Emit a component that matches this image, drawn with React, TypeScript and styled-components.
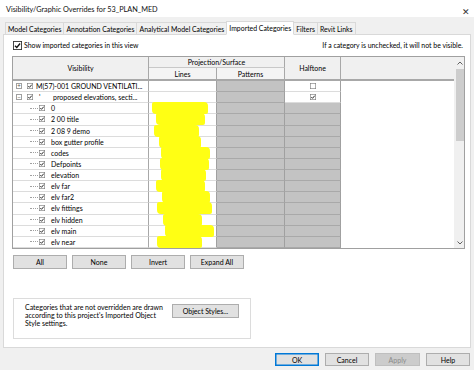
import React from "react";
import styled, { createGlobalStyle } from "styled-components";

const GlobalStyle = createGlobalStyle`
  * { box-sizing: border-box; }
  html, body { margin: 0; padding: 0; background: #f0f0f0; }
  body { font-family: Lato, "Noto Sans", "Liberation Sans", sans-serif; color: #000; }
`;

const Window = styled.div`
  width: 474px;
  height: 370px;
  background: #f0f0f0;
  display: flex;
  flex-direction: column;
  overflow: hidden;
  font-size: 7px;
`;

const TitleBar = styled.div`
  height: 17px;
  background: #fff;
  display: flex;
  align-items: center;
  justify-content: space-between;
  padding: 2px 4px 0 6px;
`;

const TitleText = styled.span`
  font-size: 7.3px;
  color: #111;
`;

const Close = styled.span`
  font-size: 9px;
  color: #333;
  margin-top: 4px;
`;

const TabStrip = styled.div`
  display: flex;
  align-items: flex-end;
  height: 17px;
  padding-left: 5px;
`;

const Tab = styled.div<{ $active?: boolean }>`
  height: ${(p) => (p.$active ? 14 : 12)}px;
  padding: 0 2px;
  display: flex;
  align-items: center;
  white-space: nowrap;
  font-size: 6.9px;
  background: ${(p) => (p.$active ? "#fff" : "#f0f0f0")};
  border: 1px solid #d9d9d9;
  border-bottom: ${(p) => (p.$active ? "1px solid #fff" : "none")};
  margin-bottom: ${(p) => (p.$active ? "-1px" : "0")};
  margin-right: -1px;
  position: relative;
  z-index: ${(p) => (p.$active ? 1 : 0)};
`;

const Panel = styled.div`
  margin: 0 3px;
  height: 314px;
  background: #fff;
  border: 1px solid #d9d9d9;
  padding: 5px 5px 0 8px;
  display: flex;
  flex-direction: column;
`;

const TopRow = styled.div`
  display: flex;
  align-items: center;
  justify-content: space-between;
  height: 10px;
  padding-left: 1px;
  padding-right: 2px;
`;

const CheckLabel = styled.label`
  display: flex;
  align-items: center;
  gap: 2px;
  font-size: 6.9px;
`;

const Note = styled.span`
  font-size: 6.9px;
`;

const Grid = styled.div`
  margin-top: 6px;
  height: 193px;
  border: 1px solid #a0a0a0;
  display: flex;
  overflow: hidden;
`;

const TableArea = styled.div`
  flex: 1;
  display: flex;
  flex-direction: column;
  overflow: hidden;
`;

const cols = "136px 68px 68px 56px 1fr";

const Header = styled.div`
  display: grid;
  grid-template-columns: ${cols};
  grid-template-rows: 11px 11px;
  background: #f0f0f0;
  border-bottom: 2px solid #a8a8a8;
  flex: none;
`;

const HeadCell = styled.div<{ $col: string; $row: string; $edge?: boolean }>`
  grid-column: ${(p) => p.$col};
  grid-row: ${(p) => p.$row};
  display: flex;
  align-items: center;
  justify-content: center;
  font-size: 7px;
  border-right: ${(p) => (p.$edge ? "none" : "1px solid #a8a8a8")};
  border-bottom: ${(p) => (p.$row === "1" ? "1px solid #c8c8c8" : "none")};
  background: ${(p) => (p.$row === "2" && !p.$edge ? "#f4f4f4" : "transparent")};
`;

const Body = styled.div`
  flex: 1;
  overflow: hidden;
`;

const Row = styled.div`
  display: grid;
  grid-template-columns: ${cols};
  height: 11.13px;
`;

const VisCell = styled.div<{ $level: number }>`
  display: flex;
  align-items: center;
  padding-left: ${(p) => (p.$level === 0 ? 3 : 17)}px;
  border-bottom: 1px solid #dcdcdc;
  border-right: 1px solid #a8a8a8;
  font-size: 7px;
  white-space: nowrap;
  overflow: hidden;
`;

const DataCell = styled.div<{ $gray?: boolean }>`
  position: relative;
  background: ${(p) => (p.$gray ? "#c3c3c3" : "#fff")};
  border-bottom: 1px solid ${(p) => (p.$gray ? "#a9a9a9" : "#dcdcdc")};
  border-right: 1px solid #a0a0a0;
  display: flex;
  align-items: center;
  justify-content: center;
`;

const Filler = styled.div`
  background: #fff;
`;

const Highlight = styled.div`
  position: absolute;
  top: -1px;
  height: 12px;
  background: #ffff14;
  border-radius: 2px 4px 2px 4px;
  z-index: 2;
`;

const Expander = styled.span`
  width: 6px;
  height: 6px;
  border: 1px solid #a0a0a0;
  display: flex;
  align-items: center;
  justify-content: center;
  font-size: 6px;
  line-height: 1;
  color: #555;
  margin-right: 5px;
  flex: none;
`;

const Dash = styled.span`
  width: 8px;
  border-top: 1px dotted #a0a0a0;
  margin-right: 1px;
  flex: none;
`;

const Label = styled.span<{ $gap: number }>`
  margin-left: ${(p) => p.$gap}px;
`;

const Quote = styled.span`
  margin-left: 6px;
  width: 8px;
`;

const Scrollbar = styled.div`
  width: 10px;
  background: #f0f0f0;
  display: flex;
  flex-direction: column;
  align-items: center;
  border-left: 1px solid #f0f0f0;
`;

const Arrow = styled.div`
  height: 11px;
  display: flex;
  align-items: center;
  justify-content: center;
  flex: none;
`;

const Track = styled.div`
  flex: 1;
  width: 100%;
  padding-top: 1px;
`;

const Thumb = styled.div`
  width: 8px;
  margin: 0 auto;
  height: 72px;
  background: #cdcdcd;
`;

const ButtonRow = styled.div`
  display: flex;
  gap: 5px;
  margin-top: 6px;
  padding-left: 1px;
`;

const Btn = styled.button<{ $w: number; $default?: boolean; $disabled?: boolean }>`
  width: ${(p) => p.$w}px;
  height: 14px;
  padding: 0;
  font-family: inherit;
  font-size: 7px;
  color: ${(p) => (p.$disabled ? "#8a8a8a" : "#000")};
  background: ${(p) => (p.$disabled ? "#cccccc" : "#e1e1e1")};
  border: 1px solid
    ${(p) => (p.$default ? "#0078d7" : p.$disabled ? "#bfbfbf" : "#adadad")};
  box-shadow: ${(p) => (p.$default ? "inset 0 0 0 0.5px #0078d7" : "none")};
  display: flex;
  align-items: center;
  justify-content: center;
`;

const InfoBox = styled.div`
  margin-top: 29px;
  margin-left: 1px;
  width: 238px;
  height: 41px;
  border: 1px solid #dcdcdc;
  display: flex;
  align-items: flex-start;
  padding: 5px 0 0 11px;
`;

const InfoText = styled.div`
  width: 147px;
  font-size: 7px;
  line-height: 8px;
  margin-top: -1px;
  white-space: nowrap;
`;

const Footer = styled.div`
  flex: 1;
  display: flex;
  justify-content: flex-end;
  gap: 6px;
  padding: 5px 4px 0 0;
`;

const FooterBtn = styled(Btn)`
  height: 13px;
`;

const Check = ({ size, checked = true, color = "#333" }: { size: number; checked?: boolean; color?: string }) => (
  <svg width={size} height={size} viewBox="0 0 10 10" style={{ flex: "none", display: "block" }}>
    <rect x="0.5" y="0.5" width="9" height="9" fill="#fff" stroke={color} strokeWidth="1" />
    {checked && <path d="M2.2 5.2 L4.2 7.2 L7.9 2.8" fill="none" stroke="#111" strokeWidth="1.5" />}
  </svg>
);

type RowData = {
  level: number;
  label: string;
  expand?: string;
  quote?: boolean;
  halftone?: boolean;
  hl?: [number, number];
};

const rows: RowData[] = [
  { level: 0, expand: "+", label: "M(57)-001 GROUND VENTILATI...", halftone: false },
  { level: 0, expand: "−", label: "proposed elevations, secti...", quote: true, halftone: true },
  { level: 1, label: "0", hl: [153, 209] },
  { level: 1, label: "2 00 title", hl: [157, 206] },
  { level: 1, label: "2 08 9 demo", hl: [155, 200] },
  { level: 1, label: "box gutter profile", hl: [160, 202] },
  { level: 1, label: "codes", hl: [162, 211] },
  { level: 1, label: "Defpoints", hl: [161, 210] },
  { level: 1, label: "elevation", hl: [162, 207] },
  { level: 1, label: "elv far", hl: [157, 206] },
  { level: 1, label: "elv far2", hl: [163, 211] },
  { level: 1, label: "elv fittings", hl: [158, 213] },
  { level: 1, label: "elv hidden", hl: [164, 203] },
  { level: 1, label: "elv main", hl: [166, 215] },
  { level: 1, label: "elv near", hl: [158, 203] },
  { level: 1, label: "elv outline" },
];

const tabs = [
  "Model Categories",
  "Annotation Categories",
  "Analytical Model Categories",
  "Imported Categories",
  "Filters",
  "Revit Links",
];

const LINES_X = 150;

export default function App() {
  return (
    <>
      <GlobalStyle />
      <Window>
        <TitleBar>
          <TitleText>Visibility/Graphic Overrides for 53_PLAN_MED</TitleText>
          <Close>✕</Close>
        </TitleBar>
        <TabStrip>
          {tabs.map((t) => (
            <Tab key={t} $active={t === "Imported Categories"}>
              {t}
            </Tab>
          ))}
        </TabStrip>
        <Panel>
          <TopRow>
            <CheckLabel>
              <Check size={9} />
              Show imported categories in this view
            </CheckLabel>
            <Note>If a category is unchecked, it will not be visible.</Note>
          </TopRow>
          <Grid>
            <TableArea>
              <Header>
                <HeadCell $col="1" $row="1 / 3">Visibility</HeadCell>
                <HeadCell $col="2 / 4" $row="1">Projection/Surface</HeadCell>
                <HeadCell $col="2" $row="2">Lines</HeadCell>
                <HeadCell $col="3" $row="2">Patterns</HeadCell>
                <HeadCell $col="4" $row="1 / 3">Halftone</HeadCell>
                <HeadCell $col="5" $row="1 / 3" $edge />
              </Header>
              <Body>
                {rows.map((r) => (
                  <Row key={r.label}>
                    <VisCell $level={r.level}>
                      {r.level === 0 ? <Expander>{r.expand}</Expander> : <Dash />}
                      <Check size={6} color="#777" />
                      {r.quote && <Quote>'</Quote>}
                      <Label $gap={r.quote ? 6 : r.level === 0 ? 3 : 6}>{r.label}</Label>
                    </VisCell>
                    <DataCell>
                      {r.hl && (
                        <Highlight
                          style={{ left: r.hl[0] - LINES_X, width: r.hl[1] - r.hl[0] }}
                        />
                      )}
                    </DataCell>
                    <DataCell $gray />
                    <DataCell $gray={r.level === 1}>
                      {r.level === 0 && <Check size={6} checked={!!r.halftone} color="#777" />}
                    </DataCell>
                    <Filler />
                  </Row>
                ))}
              </Body>
            </TableArea>
            <Scrollbar>
              <Arrow>
                <svg width="6" height="4" viewBox="0 0 6 4">
                  <path d="M0.5 3.5 L3 1 L5.5 3.5" fill="none" stroke="#606060" strokeWidth="1" />
                </svg>
              </Arrow>
              <Track>
                <Thumb />
              </Track>
              <Arrow>
                <svg width="6" height="4" viewBox="0 0 6 4">
                  <path d="M0.5 0.5 L3 3 L5.5 0.5" fill="none" stroke="#606060" strokeWidth="1" />
                </svg>
              </Arrow>
            </Scrollbar>
          </Grid>
          <ButtonRow>
            <Btn $w={54}>All</Btn>
            <Btn $w={54}>None</Btn>
            <Btn $w={54}>Invert</Btn>
            <Btn $w={54}>Expand All</Btn>
          </ButtonRow>
          <InfoBox>
            <InfoText>
              Categories that are not overridden are drawn
              <br />
              according to this project's Imported Object
              <br />
              Style settings.
            </InfoText>
            <Btn $w={67}>Object Styles...</Btn>
          </InfoBox>
        </Panel>
        <Footer>
          <FooterBtn $w={44} $default>OK</FooterBtn>
          <FooterBtn $w={44}>Cancel</FooterBtn>
          <FooterBtn $w={45} $disabled>Apply</FooterBtn>
          <FooterBtn $w={44}>Help</FooterBtn>
        </Footer>
      </Window>
    </>
  );
}
